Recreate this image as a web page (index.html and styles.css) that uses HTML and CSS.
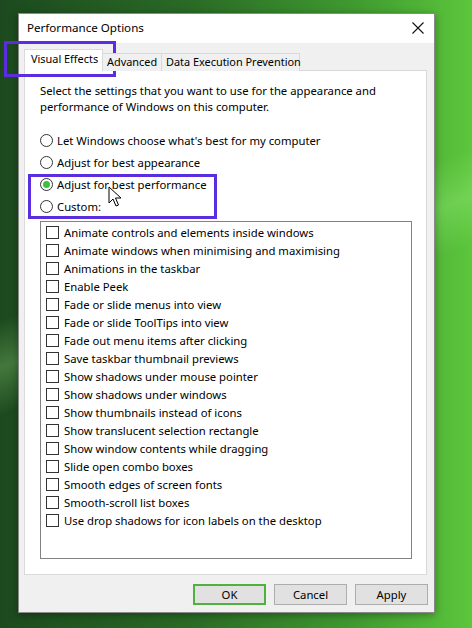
FILE: index.html
```html
<!DOCTYPE html>
<html>
<head>
<meta charset="utf-8">
<link rel="stylesheet" href="styles.css">
</head>
<body>
<div class="dialog">
  <div class="titlebar">
    <span class="title">Performance Options</span>
    <svg class="close" width="12" height="12" viewBox="0 0 12 12"><path d="M0.5 0.5 L11.5 11.5 M11.5 0.5 L0.5 11.5" stroke="#111" stroke-width="1.1" fill="none"/></svg>
  </div>
  <div class="body">
    <div class="tabs">
      <div class="tab active">Visual Effects</div>
      <div class="tab">Advanced</div>
      <div class="tab">Data Execution Prevention</div>
    </div>
    <div class="panel">
      <p class="desc">Select the settings that you want to use for the appearance and performance of Windows on this computer.</p>
      <div class="radios">
        <div class="radio"><span class="rb"></span>Let Windows choose what's best for my computer</div>
        <div class="radio"><span class="rb"></span>Adjust for best appearance</div>
        <div class="radio"><span class="rb on"></span>Adjust for best performance</div>
        <div class="radio"><span class="rb"></span>Custom:</div>
      </div>
      <div class="list">
        <div class="item"><span class="cb"></span>Animate controls and elements inside windows</div>
        <div class="item"><span class="cb"></span>Animate windows when minimising and maximising</div>
        <div class="item"><span class="cb"></span>Animations in the taskbar</div>
        <div class="item"><span class="cb"></span>Enable Peek</div>
        <div class="item"><span class="cb"></span>Fade or slide menus into view</div>
        <div class="item"><span class="cb"></span>Fade or slide ToolTips into view</div>
        <div class="item"><span class="cb"></span>Fade out menu items after clicking</div>
        <div class="item"><span class="cb"></span>Save taskbar thumbnail previews</div>
        <div class="item"><span class="cb"></span>Show shadows under mouse pointer</div>
        <div class="item"><span class="cb"></span>Show shadows under windows</div>
        <div class="item"><span class="cb"></span>Show thumbnails instead of icons</div>
        <div class="item"><span class="cb"></span>Show translucent selection rectangle</div>
        <div class="item"><span class="cb"></span>Show window contents while dragging</div>
        <div class="item"><span class="cb"></span>Slide open combo boxes</div>
        <div class="item"><span class="cb"></span>Smooth edges of screen fonts</div>
        <div class="item"><span class="cb"></span>Smooth-scroll list boxes</div>
        <div class="item"><span class="cb"></span>Use drop shadows for icon labels on the desktop</div>
      </div>
    </div>
    <div class="buttons">
      <button class="btn default">OK</button>
      <button class="btn">Cancel</button>
      <button class="btn">Apply</button>
    </div>
  </div>
</div>
<div class="hl hl-tab"></div>
<div class="hl hl-radio"></div>
<svg class="cursor" width="14" height="22" viewBox="0 0 14 22"><path d="M1 1 L1 17 L5 13 L8 20 L10.5 19 L7.5 12 L13 12 Z" fill="#fff" stroke="#000" stroke-width="1" stroke-linejoin="round"/></svg>
</body>
</html>
```
FILE: styles.css
```css
html, body {
  margin: 0;
  padding: 0;
}
body {
  width: 472px;
  height: 628px;
  overflow: hidden;
  position: relative;
  font-family: "Noto Sans", "Open Sans", sans-serif;
  font-size: 11.3px;
  color: #000;
  background:
    linear-gradient(160deg, rgba(255,255,255,0) 40%, rgba(180,255,150,0.25) 46%, rgba(255,255,255,0) 52%),
    linear-gradient(90deg, #1c4a1e 0%, #2a6a26 40%, #3f9a30 75%, #5cc63c 100%);
  padding: 13px 0 0 18px;
  box-sizing: border-box;
}
.dialog {
  width: 417px;
  height: 600px;
  background: #f0f0f0;
  border: 1px solid #8a8a8a;
  box-sizing: border-box;
  display: flex;
  flex-direction: column;
  box-shadow: 0 2px 8px rgba(0,0,0,0.35);
}
.titlebar {
  height: 29px;
  background: #fff;
  display: flex;
  align-items: center;
  justify-content: space-between;
  padding: 0 10px 0 8px;
  flex: none;
}
.title {
  font-size: 11.6px;
  color: #000;
  margin-top: -3px;
}
.close {
  margin-top: -2px;
}
.body {
  flex: 1;
  display: flex;
  flex-direction: column;
  padding: 6px 7px 0 5px;
}
.tabs {
  display: flex;
  align-items: flex-end;
  height: 22px;
  position: relative;
  z-index: 1;
  margin-bottom: -1px;
}
.tab {
  height: 18px;
  line-height: 16px;
  border: 1px solid #d9d9d9;
  border-bottom: none;
  border-left: none;
  background: #f0f0f0;
  padding: 0 0 0 4px;
  box-sizing: border-box;
  white-space: nowrap;
  flex: none;
  font-size: 10.9px;
}
.tab.active {
  height: 22px;
  line-height: 18px;
  background: #fff;
  border-left: 1px solid #d9d9d9;
  width: 79px;
  padding-left: 6px;
}
.tab:nth-child(2) { width: 59px; }
.tab:nth-child(3) { width: 138px; }
.panel {
  height: 505px;
  background: #fff;
  border: 1px solid #d9d9d9;
  box-sizing: border-box;
  padding: 12px 14px 0 15px;
  display: flex;
  flex-direction: column;
}
.desc {
  margin: 0;
  line-height: 16px;
  width: 345px;
}
.radios {
  margin-top: 14px;
  display: flex;
  flex-direction: column;
}
.radio {
  height: 22px;
  display: flex;
  align-items: center;
}
.radio:last-child {
  height: 23px;
}
.rb {
  width: 11px;
  height: 11px;
  border: 1px solid #333;
  border-radius: 50%;
  margin-right: 4px;
  flex: none;
  position: relative;
  background: #fff;
}
.rb.on::after {
  content: "";
  position: absolute;
  left: 2px;
  top: 2px;
  width: 7px;
  height: 7px;
  border-radius: 50%;
  background: #3fbf3f;
}
.list {
  margin-top: 3px;
  height: 338px;
  border: 1px solid #828282;
  box-sizing: border-box;
  padding: 1px 0 0 5px;
}
.item {
  height: 18px;
  display: flex;
  align-items: center;
  white-space: nowrap;
}
.cb {
  width: 11px;
  height: 11px;
  border: 1px solid #333;
  margin-right: 5px;
  flex: none;
  background: #fff;
}
.buttons {
  display: flex;
  justify-content: flex-end;
  gap: 8px;
  margin-top: 9px;
  margin-right: -1px;
}
.btn {
  width: 73px;
  height: 21px;
  background: #e1e1e1;
  border: 1px solid #adadad;
  font-family: inherit;
  font-size: 11.3px;
  color: #000;
  padding: 0;
  line-height: 18px;
}
.btn.default {
  border: 2px solid #52b043;
}
.hl {
  position: absolute;
  border: 3px solid #5a2de0;
  box-sizing: border-box;
}
.hl-tab {
  left: 4px;
  top: 41px;
  width: 112px;
  height: 36px;
}
.hl-radio {
  left: 28px;
  top: 174px;
  width: 189px;
  height: 45px;
}
.cursor {
  position: absolute;
  left: 108px;
  top: 186px;
}
```
